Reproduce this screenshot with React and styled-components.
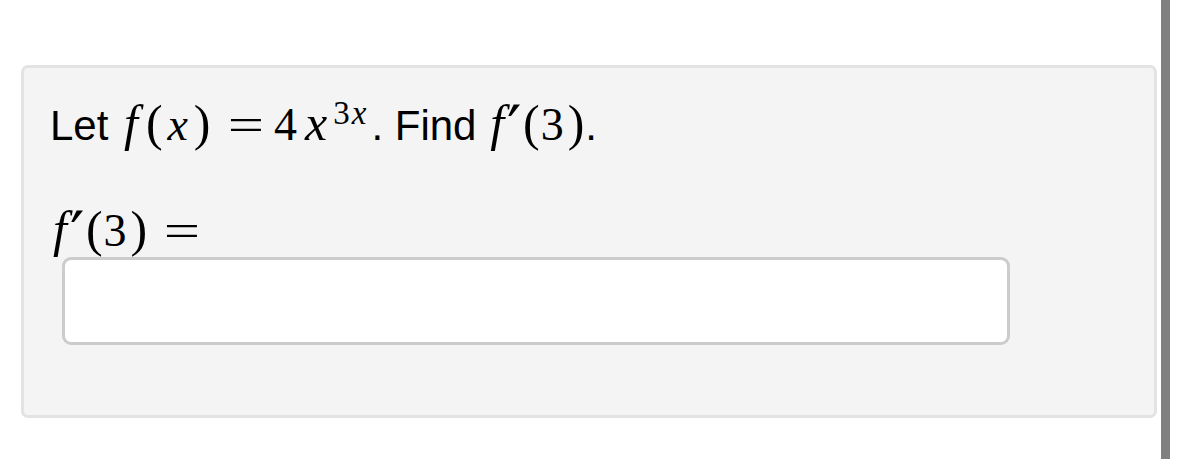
import React from "react";
import styled, { createGlobalStyle } from "styled-components";

const GlobalStyle = createGlobalStyle`
  html, body { margin: 0; padding: 0; background: #ffffff; }
  body { font-family: "Liberation Sans", Arial, sans-serif; }
`;

const Page = styled.div`
  display: flex;
  width: 1179px;
  height: 459px;
  box-sizing: border-box;
  padding: 65px 9px 0 21px;
  gap: 4px;
`;

const Card = styled.section`
  box-sizing: border-box;
  width: 1136px;
  height: 353px;
  background: #f4f4f4;
  border: 3px solid #e3e3e3;
  border-radius: 7px;
  padding: 31px 26px 0 26px;
`;

const ScrollBar = styled.div`
  width: 9px;
  margin-top: -65px;
  background: #808080;
`;

const Line = styled.p`
  margin: ${(p) => p.$mt || 0}px 0 0 0;
  font-size: 42px;
  line-height: 48px;
  color: #000;
  white-space: nowrap;
`;

const Formula = styled.span`
  font-family: "Liberation Serif", "Times New Roman", serif;
  font-size: 46px;
  line-height: 48px;
  padding-left: ${(p) => p.$pl || 0}px;
  margin-right: ${(p) => p.$mr || 0}px;
`;

const Var = styled.span`
  font-style: italic;
  font-size: ${(p) => p.$size || 46}px;
  line-height: 0;
  margin-left: ${(p) => p.$ml || 0}px;
`;

const Num = styled.span`
  font-style: normal;
  margin-left: ${(p) => p.$ml || 0}px;
`;

const Paren = styled.span`
  font-style: normal;
  font-size: 50px;
  margin-left: ${(p) => p.$ml || 0}px;
`;

const Rel = styled.span`
  display: inline-block;
  transform: scaleX(1.4);
  margin-left: ${(p) => p.$ml || 0}px;
`;

const Sup = styled.span`
  font-size: 33px;
  line-height: 0;
  vertical-align: 16px;
  margin-left: ${(p) => p.$ml || 0}px;
  & > span + span { margin-left: 2px; }
`;

const Prime = styled.span`
  display: inline-block;
  width: 14px;
  font-family: "DejaVu Serif", serif;
  font-style: normal;
  font-size: 64px;
  line-height: 0;
  vertical-align: -11px;
  margin-left: ${(p) => p.$ml || 0}px;
`;

const AnswerBox = styled.input`
  display: block;
  box-sizing: border-box;
  width: 948px;
  height: 88px;
  margin: 1px 0 0 12px;
  border: 3px solid #cccccc;
  border-radius: 9px;
  background: #ffffff;
  outline: none;
  font-size: 30px;
  padding: 0 14px;
`;

function FPrimeOfThree() {
  return (
    <>
      <Var $size={50}>f</Var>
      <Prime $ml={3}>′</Prime>
      <Paren $ml={2}>(</Paren>
      <Num $ml={1}>3</Num>
      <Paren $ml={4}>)</Paren>
    </>
  );
}

export default function App() {
  return (
    <>
      <GlobalStyle />
      <Page>
        <Card>
          <Line>
            Let{" "}
            <Formula $pl={4} $mr={5}>
              <Var $size={50}>f</Var>
              <Paren $ml={8}>(</Paren>
              <Var $ml={4.8}>x</Var>
              <Paren $ml={6}>)</Paren>
              <Rel $ml={22}>=</Rel>
              <Num $ml={15.6}>4</Num>
              <Var $ml={8} $size={50}>x</Var>
              <Sup $ml={6}>
                <Num>3</Num>
                <Var $size={33}>x</Var>
              </Sup>
            </Formula>
            . Find{" "}
            <Formula $pl={2} $mr={1}>
              <FPrimeOfThree />
            </Formula>
            .
          </Line>
          <Line $mt={55}>
            <Formula $pl={3}>
              <FPrimeOfThree />
              <Rel $ml={22}>=</Rel>
            </Formula>
          </Line>
          <AnswerBox type="text" aria-label="f'(3)" />
        </Card>
        <ScrollBar />
      </Page>
    </>
  );
}
